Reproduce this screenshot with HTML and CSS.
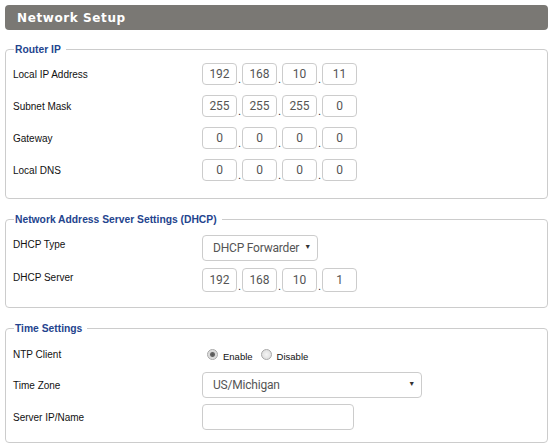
FILE: index.html
```html
<!DOCTYPE html>
<html lang="en">
<head>
<meta charset="UTF-8">
<title>Network Setup</title>
<link rel="stylesheet" href="styles.css">
</head>
<body>
<div class="title-bar"><h1>Network Setup</h1></div>

<fieldset class="group group-router">
<legend>Router IP</legend>
<div class="row">
<label>Local IP Address</label>
<div class="ip">
<input class="octet" value="192"><span class="dot">.</span><input class="octet" value="168"><span class="dot">.</span><input class="octet" value="10"><span class="dot">.</span><input class="octet" value="11">
</div>
</div>
<div class="row">
<label>Subnet Mask</label>
<div class="ip">
<input class="octet" value="255"><span class="dot">.</span><input class="octet" value="255"><span class="dot">.</span><input class="octet" value="255"><span class="dot">.</span><input class="octet" value="0">
</div>
</div>
<div class="row">
<label>Gateway</label>
<div class="ip">
<input class="octet" value="0"><span class="dot">.</span><input class="octet" value="0"><span class="dot">.</span><input class="octet" value="0"><span class="dot">.</span><input class="octet" value="0">
</div>
</div>
<div class="row">
<label>Local DNS</label>
<div class="ip">
<input class="octet" value="0"><span class="dot">.</span><input class="octet" value="0"><span class="dot">.</span><input class="octet" value="0"><span class="dot">.</span><input class="octet" value="0">
</div>
</div>
</fieldset>

<fieldset class="group group-dhcp">
<legend>Network Address Server Settings (DHCP)</legend>
<div class="row row-tall row-top">
<label>DHCP Type</label>
<div class="select select-short"><span>DHCP Forwarder</span></div>
</div>
<div class="row row-mid row-top">
<label>DHCP Server</label>
<div class="ip">
<input class="octet" value="192"><span class="dot">.</span><input class="octet" value="168"><span class="dot">.</span><input class="octet" value="10"><span class="dot">.</span><input class="octet" value="1">
</div>
</div>
</fieldset>

<fieldset class="group group-time">
<legend>Time Settings</legend>
<div class="row row-radio">
<label>NTP Client</label>
<div class="radios">
<input type="radio" name="ntp" class="radio" checked><span class="radio-text">Enable</span>
<input type="radio" name="ntp" class="radio"><span class="radio-text">Disable</span>
</div>
</div>
<div class="row row-tall">
<label>Time Zone</label>
<div class="select select-wide"><span>US/Michigan</span></div>
</div>
<div class="row row-tall">
<label>Server IP/Name</label>
<input class="text-field">
</div>
</fieldset>
</body>
</html>
```

FILE: styles.css
```css
body {
margin: 5px;
font-family: "Liberation Sans", Arial, sans-serif;
font-size: 10px;
color: #111;
background: #fff;
}
.title-bar {
background: #7a7874;
border-radius: 4px;
height: 25px;
display: flex;
align-items: center;
padding-left: 12px;
}
.title-bar h1 {
margin: 0;
font-family: "DejaVu Sans", Verdana, sans-serif;
font-size: 12px;
font-weight: bold;
letter-spacing: 0.6px;
color: #fff;
}
.group {
margin: 15px 0 0;
padding: 10px 7px 15px 7px;
border: 1px solid #ccc;
border-radius: 4px;
}
.group-router {
margin-top: 14px;
padding-top: 8px;
padding-bottom: 17px;
}
.group-time {
padding-bottom: 12px;
}
.group legend {
padding: 0 5px 0 1px;
margin-left: 1px;
font-weight: bold;
font-size: 10.3px;
color: #24448e;
}
.row {
display: flex;
align-items: center;
height: 22px;
}
.row + .row {
margin-top: 10px;
}
.row label {
width: 189px;
flex: none;
}
.row-tall {
height: 26px;
}
.row-mid {
height: 24px;
}
.row-top {
align-items: flex-start;
}
.row-top label {
padding-top: 4px;
}
.row-radio {
height: 20px;
}
.group-dhcp .row + .row {
margin-top: 7px;
}
.group-time .row + .row {
margin-top: 8px;
}
.group-time .row + .row + .row {
margin-top: 6px;
}
.ip {
display: flex;
align-items: flex-end;
}
.octet {
box-sizing: border-box;
width: 35px;
height: 22px;
border: 1px solid #ccc;
border-radius: 4px;
text-align: center;
font-family: Roboto, sans-serif;
font-size: 12px;
color: #555;
padding: 0;
}
.row-mid .octet {
height: 24px;
}
.dot {
width: 5px;
text-align: center;
font-size: 11px;
line-height: 12px;
color: #333;
}
.select {
box-sizing: border-box;
position: relative;
height: 26px;
border: 1px solid #ccc;
border-radius: 4px;
display: flex;
align-items: center;
padding-left: 10px;
font-family: Roboto, sans-serif;
font-size: 12px;
letter-spacing: -0.2px;
color: #555;
}
.select::after {
content: "\25BC";
position: absolute;
right: 6px;
top: 7px;
font-size: 7px;
color: #333;
}
.select-short {
width: 116px;
}
.select-wide {
width: 220px;
}
.text-field {
box-sizing: border-box;
width: 152px;
height: 26px;
border: 1px solid #ccc;
border-radius: 4px;
}
.radios {
display: flex;
align-items: center;
padding-left: 5px;
}
.radio {
appearance: none;
margin: 0 5px 0 0;
width: 11px;
height: 11px;
border: 1px solid #a8a8a8;
border-radius: 50%;
background: radial-gradient(circle, #f4f4f4 0, #d8d8d8 100%);
}
.radio:checked {
background: radial-gradient(circle, #555 0, #666 2px, #d8d8d8 3px, #eee 100%);
}
.radio-text {
font-size: 9.5px;
margin-right: 8px;
padding-top: 4px;
}
```
